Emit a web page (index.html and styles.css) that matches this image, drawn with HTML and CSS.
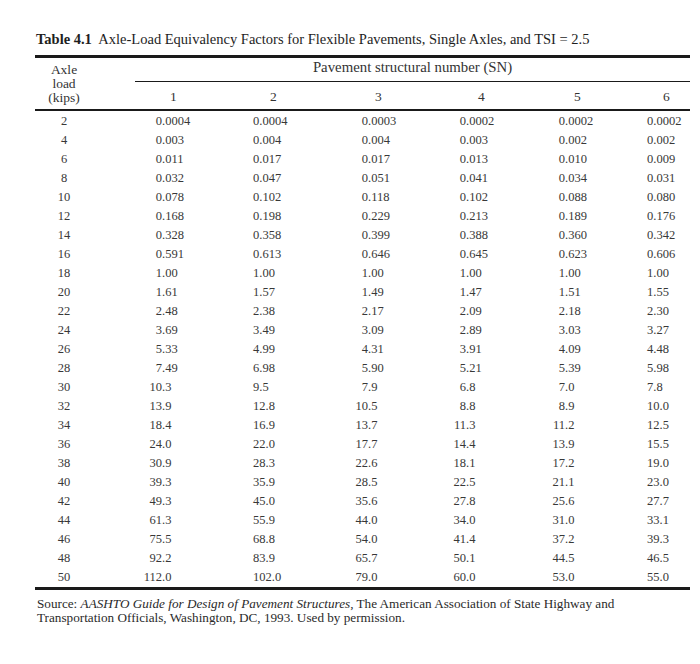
FILE: index.html
```html
<!DOCTYPE html>
<html>
<head>
<meta charset="utf-8">
<link rel="stylesheet" href="styles.css">
</head>
<body>
<div class="page">
  <p class="caption"><b>Table 4.1</b>&nbsp; Axle-Load Equivalency Factors for Flexible Pavements, Single Axles, and TSI = 2.5</p>
  <table class="factors">
    <colgroup>
      <col class="c-axle"><col class="c1"><col class="c2"><col class="c3"><col class="c4"><col class="c5"><col class="c6">
    </colgroup>
    <thead>
      <tr class="group-row">
        <th rowspan="2" class="axle-head">Axle<br>load<br>(kips)</th>
        <th colspan="6" class="group">Pavement structural number (SN)</th>
      </tr>
      <tr class="sn-row">
        <th>1</th><th>2</th><th>3</th><th>4</th><th>5</th><th>6</th>
      </tr>
    </thead>
    <tbody>
      <tr><td>2</td><td><span class="i">0</span>.0004</td><td><span class="i">0</span>.0004</td><td><span class="i">0</span>.0003</td><td><span class="i">0</span>.0002</td><td><span class="i">0</span>.0002</td><td><span class="i">0</span>.0002</td></tr>
      <tr><td>4</td><td><span class="i">0</span>.003</td><td><span class="i">0</span>.004</td><td><span class="i">0</span>.004</td><td><span class="i">0</span>.003</td><td><span class="i">0</span>.002</td><td><span class="i">0</span>.002</td></tr>
      <tr><td>6</td><td><span class="i">0</span>.011</td><td><span class="i">0</span>.017</td><td><span class="i">0</span>.017</td><td><span class="i">0</span>.013</td><td><span class="i">0</span>.010</td><td><span class="i">0</span>.009</td></tr>
      <tr><td>8</td><td><span class="i">0</span>.032</td><td><span class="i">0</span>.047</td><td><span class="i">0</span>.051</td><td><span class="i">0</span>.041</td><td><span class="i">0</span>.034</td><td><span class="i">0</span>.031</td></tr>
      <tr><td>10</td><td><span class="i">0</span>.078</td><td><span class="i">0</span>.102</td><td><span class="i">0</span>.118</td><td><span class="i">0</span>.102</td><td><span class="i">0</span>.088</td><td><span class="i">0</span>.080</td></tr>
      <tr><td>12</td><td><span class="i">0</span>.168</td><td><span class="i">0</span>.198</td><td><span class="i">0</span>.229</td><td><span class="i">0</span>.213</td><td><span class="i">0</span>.189</td><td><span class="i">0</span>.176</td></tr>
      <tr><td>14</td><td><span class="i">0</span>.328</td><td><span class="i">0</span>.358</td><td><span class="i">0</span>.399</td><td><span class="i">0</span>.388</td><td><span class="i">0</span>.360</td><td><span class="i">0</span>.342</td></tr>
      <tr><td>16</td><td><span class="i">0</span>.591</td><td><span class="i">0</span>.613</td><td><span class="i">0</span>.646</td><td><span class="i">0</span>.645</td><td><span class="i">0</span>.623</td><td><span class="i">0</span>.606</td></tr>
      <tr><td>18</td><td><span class="i">1</span>.00</td><td><span class="i">1</span>.00</td><td><span class="i">1</span>.00</td><td><span class="i">1</span>.00</td><td><span class="i">1</span>.00</td><td><span class="i">1</span>.00</td></tr>
      <tr><td>20</td><td><span class="i">1</span>.61</td><td><span class="i">1</span>.57</td><td><span class="i">1</span>.49</td><td><span class="i">1</span>.47</td><td><span class="i">1</span>.51</td><td><span class="i">1</span>.55</td></tr>
      <tr><td>22</td><td><span class="i">2</span>.48</td><td><span class="i">2</span>.38</td><td><span class="i">2</span>.17</td><td><span class="i">2</span>.09</td><td><span class="i">2</span>.18</td><td><span class="i">2</span>.30</td></tr>
      <tr><td>24</td><td><span class="i">3</span>.69</td><td><span class="i">3</span>.49</td><td><span class="i">3</span>.09</td><td><span class="i">2</span>.89</td><td><span class="i">3</span>.03</td><td><span class="i">3</span>.27</td></tr>
      <tr><td>26</td><td><span class="i">5</span>.33</td><td><span class="i">4</span>.99</td><td><span class="i">4</span>.31</td><td><span class="i">3</span>.91</td><td><span class="i">4</span>.09</td><td><span class="i">4</span>.48</td></tr>
      <tr><td>28</td><td><span class="i">7</span>.49</td><td><span class="i">6</span>.98</td><td><span class="i">5</span>.90</td><td><span class="i">5</span>.21</td><td><span class="i">5</span>.39</td><td><span class="i">5</span>.98</td></tr>
      <tr><td>30</td><td><span class="i">10</span>.3</td><td><span class="i">9</span>.5</td><td><span class="i">7</span>.9</td><td><span class="i">6</span>.8</td><td><span class="i">7</span>.0</td><td><span class="i">7</span>.8</td></tr>
      <tr><td>32</td><td><span class="i">13</span>.9</td><td><span class="i">12</span>.8</td><td><span class="i">10</span>.5</td><td><span class="i">8</span>.8</td><td><span class="i">8</span>.9</td><td><span class="i">10</span>.0</td></tr>
      <tr><td>34</td><td><span class="i">18</span>.4</td><td><span class="i">16</span>.9</td><td><span class="i">13</span>.7</td><td><span class="i">11</span>.3</td><td><span class="i">11</span>.2</td><td><span class="i">12</span>.5</td></tr>
      <tr><td>36</td><td><span class="i">24</span>.0</td><td><span class="i">22</span>.0</td><td><span class="i">17</span>.7</td><td><span class="i">14</span>.4</td><td><span class="i">13</span>.9</td><td><span class="i">15</span>.5</td></tr>
      <tr><td>38</td><td><span class="i">30</span>.9</td><td><span class="i">28</span>.3</td><td><span class="i">22</span>.6</td><td><span class="i">18</span>.1</td><td><span class="i">17</span>.2</td><td><span class="i">19</span>.0</td></tr>
      <tr><td>40</td><td><span class="i">39</span>.3</td><td><span class="i">35</span>.9</td><td><span class="i">28</span>.5</td><td><span class="i">22</span>.5</td><td><span class="i">21</span>.1</td><td><span class="i">23</span>.0</td></tr>
      <tr><td>42</td><td><span class="i">49</span>.3</td><td><span class="i">45</span>.0</td><td><span class="i">35</span>.6</td><td><span class="i">27</span>.8</td><td><span class="i">25</span>.6</td><td><span class="i">27</span>.7</td></tr>
      <tr><td>44</td><td><span class="i">61</span>.3</td><td><span class="i">55</span>.9</td><td><span class="i">44</span>.0</td><td><span class="i">34</span>.0</td><td><span class="i">31</span>.0</td><td><span class="i">33</span>.1</td></tr>
      <tr><td>46</td><td><span class="i">75</span>.5</td><td><span class="i">68</span>.8</td><td><span class="i">54</span>.0</td><td><span class="i">41</span>.4</td><td><span class="i">37</span>.2</td><td><span class="i">39</span>.3</td></tr>
      <tr><td>48</td><td><span class="i">92</span>.2</td><td><span class="i">83</span>.9</td><td><span class="i">65</span>.7</td><td><span class="i">50</span>.1</td><td><span class="i">44</span>.5</td><td><span class="i">46</span>.5</td></tr>
      <tr><td>50</td><td><span class="i">112</span>.0</td><td><span class="i">102</span>.0</td><td><span class="i">79</span>.0</td><td><span class="i">60</span>.0</td><td><span class="i">53</span>.0</td><td><span class="i">55</span>.0</td></tr>
    </tbody>
  </table>
  <p class="source">Source: <i>AASHTO Guide for Design of Pavement Structures</i>, The American Association of State Highway and<br>Transportation Officials, Washington, DC, 1993. Used by permission.</p>
</div>
</body>
</html>
```

FILE: styles.css
```css
html, body {
  margin: 0;
  padding: 0;
  background: #ffffff;
}

.page {
  padding: 31px 0 0 35px;
  font-family: "Liberation Serif", "Times New Roman", serif;
  color: #2e2e2e;
}

.caption {
  margin: 0 0 7px 1px;
  font-size: 14.5px;
  line-height: 17px;
  color: #1e1e1e;
}

.caption b {
  font-weight: bold;
}

.factors {
  border-collapse: collapse;
  table-layout: fixed;
  width: 655px;
  border-top: 3px solid #1a1a1a;
  border-bottom: 3px solid #1a1a1a;
  font-size: 12.5px;
}

.c-axle { width: 100px; }
.c1 { width: 86px; }
.c2 { width: 103px; }
.c3 { width: 104px; }
.c4 { width: 99px; }
.c5 { width: 94px; }
.c6 { width: 69px; }

.factors th {
  font-weight: normal;
  padding: 0;
  color: #333;
}

.axle-head {
  text-align: center;
  vertical-align: bottom;
  padding: 0 42px 4px 0 !important;
  font-size: 13.5px;
  line-height: 14px;
  border-bottom: 2px solid #1a1a1a;
}

.group {
  text-align: center;
  font-size: 14.8px;
  line-height: 17px;
  padding: 1px 0 5px 0 !important;
  border-bottom: 1px solid #1a1a1a;
}

.sn-row th {
  text-align: left;
  font-size: 13.5px;
  line-height: 16px;
  padding-top: 7px;
  padding-bottom: 4px;
  border-bottom: 2px solid #1a1a1a;
}

.sn-row th:nth-child(1) { padding-left: 35px; }
.sn-row th:nth-child(2) { padding-left: 49px; }
.sn-row th:nth-child(3) { padding-left: 51px; }
.sn-row th:nth-child(4) { padding-left: 50px; }
.sn-row th:nth-child(5) { padding-left: 47px; }
.sn-row th:nth-child(6) { padding-left: 42px; }

.factors td {
  padding: 0;
  height: 19px;
  line-height: 19px;
  white-space: nowrap;
  color: #383838;
}

.factors tbody tr:first-child td {
  padding-top: 1px;
}

.factors td:first-child {
  text-align: center;
  padding-right: 42px;
}

.i {
  display: inline-block;
  width: 19px;
  text-align: right;
}

.factors td:nth-child(2) { padding-left: 8px; }
.factors td:nth-child(3) { padding-left: 32px; }
.factors td:nth-child(4) { padding-left: 25px; }
.factors td:nth-child(5) { padding-left: 19px; }
.factors td:nth-child(6) { padding-left: 19px; }
.factors td:nth-child(7) { padding-left: 26px; }

.factors td:nth-child(3) .i,
.factors td:nth-child(7) .i {
  display: inline;
  width: auto;
}

.source {
  margin: 7px 0 0 2px;
  font-size: 13.2px;
  line-height: 14px;
  color: #2a2a2a;
}
```
